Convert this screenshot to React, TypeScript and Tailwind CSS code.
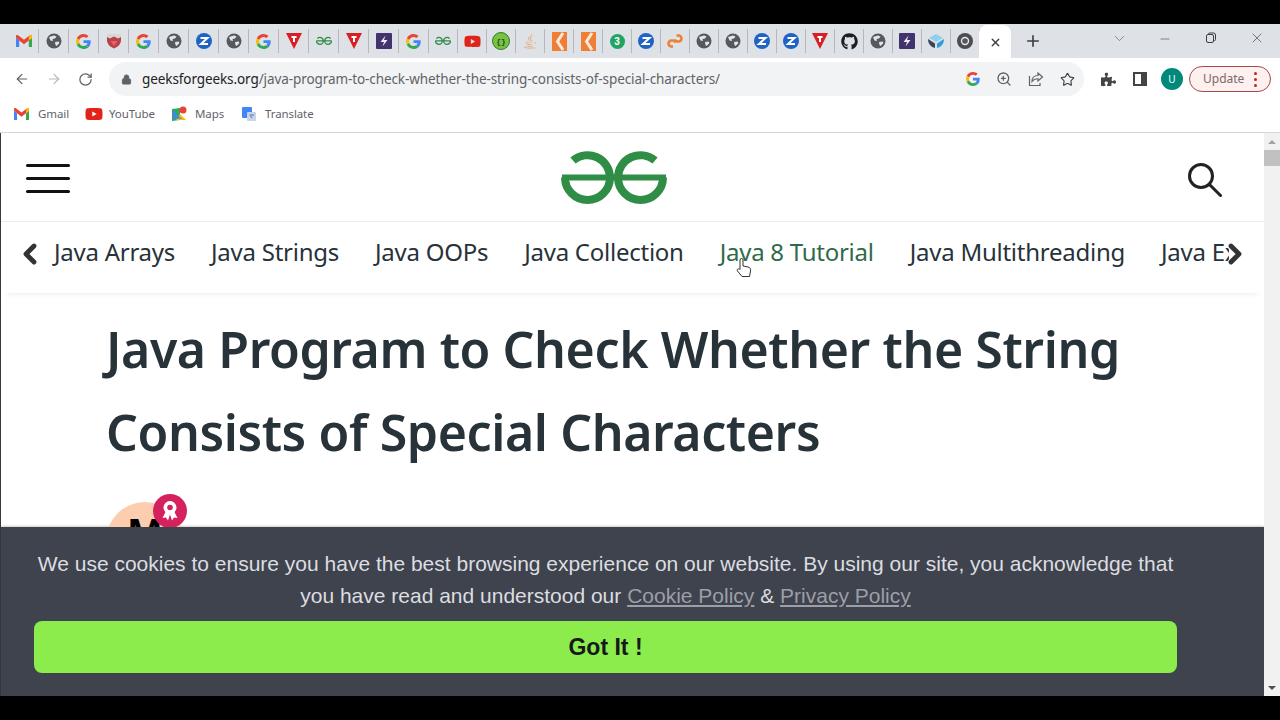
import React from "react";
import { ArrowLeft, ArrowRight, RotateCw, ZoomIn, Star, ChevronDown, Minus, X, Plus, Lock, ChevronLeft, ChevronRight } from "lucide-react";
import { FaGithub, FaYoutube, FaPuzzlePiece, FaJava } from "react-icons/fa";

const GoogleG = ({ s = 15 }: { s?: number }) => (
  <svg width={s} height={s} viewBox="0 0 48 48">
    <path fill="#EA4335" d="M24 9.5c3.54 0 6.71 1.22 9.21 3.6l6.85-6.85C35.9 2.38 30.47 0 24 0 14.62 0 6.51 5.38 2.56 13.22l7.98 6.19C12.43 13.72 17.74 9.5 24 9.5z" />
    <path fill="#4285F4" d="M46.98 24.55c0-1.57-.15-3.09-.38-4.55H24v9.02h12.94c-.58 2.96-2.26 5.48-4.78 7.18l7.73 6c4.51-4.18 7.09-10.36 7.09-17.65z" />
    <path fill="#FBBC05" d="M10.53 28.59c-.48-1.45-.76-2.99-.76-4.59s.27-3.14.76-4.59l-7.98-6.19C.92 16.46 0 20.12 0 24c0 3.88.92 7.54 2.56 10.78l7.97-6.19z" />
    <path fill="#34A853" d="M24 48c6.48 0 11.93-2.13 15.89-5.81l-7.73-6c-2.15 1.45-4.92 2.3-8.16 2.3-6.26 0-11.57-4.22-13.47-9.91l-7.98 6.19C6.51 42.62 14.62 48 24 48z" />
  </svg>
);
const GmailM = ({ s = 16 }: { s?: number }) => (
  <svg width={s} height={s * 0.8} viewBox="0 0 20 16">
    <path fill="#4285F4" d="M0 3v13h4V7z" />
    <path fill="#34A853" d="M16 7v9h4V3z" />
    <path fill="#EA4335" d="M0 1.5 C0 0 2 -0.5 3 .5 L10 6 L17 .5 C18 -.5 20 0 20 1.5 V3 L16 7 L10 11.5 L4 7 L0 3z" />
    <path fill="#FBBC05" d="M16 2.5 V7 L20 4 V1.5 C20 0 18 -.5 17 .5z" />
  </svg>
);
const Globe = () => (
  <svg width="16" height="16" viewBox="0 0 16 16">
    <circle cx="8" cy="8" r="7.5" fill="#56595e" />
    <path fill="#e4e6e9" d="M3 4 L8 2.5 L10.5 3.5 L9 5.5 L6.5 6 L7 8 L4.5 7.5z M9 9 L12.5 8.5 L13.5 10 L10.5 13 L9.5 12z" />
  </svg>
);
const Zed = () => (
  <svg width="16" height="16" viewBox="0 0 16 16">
    <circle cx="8" cy="8" r="8" fill="#1f64c4" />
    <path d="M4.5 5h7L5 11h7" fill="none" stroke="#fff" strokeWidth="2" />
  </svg>
);
const RedV = () => (
  <svg width="16" height="18" viewBox="0 0 16 18">
    <path d="M0 1h16L8 17z" fill="#d81f26" />
    <path d="M5.5 5h5M8 5v5" stroke="#fff" strokeWidth="2" />
  </svg>
);
const Gfg = ({ s = 16 }: { s?: number }) => (
  <svg width={s} height={s * 0.6} viewBox="0 0 106 53" fill="none" stroke="#2f8d46" strokeWidth="9">
    <path d="M9 12A23 23 0 0 1 49 27A23 23 0 0 1 3 27M97 12A23 23 0 0 0 57 27A23 23 0 0 0 103 27M3 27H103" />
  </svg>
);
const Bolt = () => (
  <svg width="16" height="16" viewBox="0 0 16 16">
    <rect width="16" height="16" rx="1" fill="#40336e" />
    <path d="M9.5 2.5 4.5 9H8l-1.5 4.5L11.5 7H8z" fill="#f2e9f5" />
  </svg>
);
const Shield = () => (
  <svg width="16" height="16" viewBox="0 0 16 16">
    <path d="M1 1h14v6c0 4-3 7-7 8.500C4 14 1 11 1 7z" fill="#b8424a" />
    <path d="M1 1h14v3L12 5.500 8 3.500 4 5.500 1 4z" fill="#d9d6cf" />
    <path d="M4.500 8h7L8 13z" fill="#e3656b" />
  </svg>
);
const Curly = () => (
  <svg width="18" height="18" viewBox="0 0 18 18">
    <circle cx="9" cy="9" r="8.500" fill="#79c143" stroke="#2e7d2e" />
    <text x="9" y="12" textAnchor="middle" fontSize="8" fontWeight="700" fill="#1f4d1f" fontFamily="'Liberation Mono', monospace">{"{}"}</text>
  </svg>
);
const K = () => (
  <svg width="15" height="19" viewBox="0 0 15 19">
    <rect width="15" height="19" fill="#ee7f34" />
    <path d="M11 1 5.500 9.500 11 18" fill="none" stroke="#fbe9dc" strokeWidth="3" />
  </svg>
);
const Three = () => (
  <div className="w-[15px] h-[15px] rounded-full bg-[#1fa463] text-white text-[10px] font-bold flex items-center justify-center font-['Liberation_Sans',sans-serif]">3</div>
);
const LinkI = () => (
  <svg width="16" height="16" viewBox="0 0 16 16" fill="none" stroke="#ee7f34" strokeWidth="2.600">
    <path d="M6 13.500H4.500a3 3 0 0 1 0-6H6a3 3 0 0 1 2.500 2" />
    <path d="M9.500 2.500h2a3 3 0 0 1 0 6H10a3 3 0 0 1-2.500-2" />
  </svg>
);
const Cube = () => (
  <svg width="18" height="16" viewBox="0 0 18 16">
    <path d="M9 1l7 4-7 4-7-4z" fill="#8fd0ee" />
    <path d="M1 6l7 4.500V15C4 14 1 11 1 6z" fill="#3a4658" />
    <path d="M17 6l-7 4.500V15c4-1 7-4 7-9z" fill="#2f9ed8" />
  </svg>
);
const ChromeI = () => (
  <svg width="16" height="16" viewBox="0 0 16 16">
    <circle cx="8" cy="8" r="8" fill="#4b4d50" />
    <circle cx="8" cy="8" r="4.200" fill="#e8e9ec" />
    <circle cx="8" cy="8" r="2.800" fill="#55585c" />
  </svg>
);

const tabIcons: React.ReactNode[] = [
  <GmailM />, <Globe />, <GoogleG />, <Shield />, <GoogleG />, <Globe />, <Zed />, <Globe />, <GoogleG />, <RedV />, <Gfg />, <RedV />, <Bolt />, <GoogleG />,
  <Gfg />, <FaYoutube size={17} color="#e2231a" />, <Curly />, <FaJava size={16} color="#e8a56c" />, <K />, <K />, <Three />, <Zed />, <LinkI />, <Globe />, <Globe />, <Zed />, <Zed />, <RedV />,
  <FaGithub size={17} color="#1b1f23" />, <Globe />, <Bolt />, <Cube />, <ChromeI />,
];

const bookmarks: [React.ReactNode, string, string][] = [
  [<GmailM s={15} />, "Gmail", "gap-[9px] w-[71px]"],
  [<FaYoutube size={18} color="#e2231a" />, "YouTube", "gap-[6px] w-[86px]"],
  [<svg width="16" height="16" viewBox="0 0 16 16"><path d="M1 3l8-1v12l-8 1z" fill="#34a853" /><path d="M9 8l6 6H5z" fill="#fbbc05" /><path d="M1 3l10 10H1z" fill="#4285f4" opacity=".8" /><circle cx="12" cy="4" r="3.500" fill="#ea4335" /></svg>, "Maps", "gap-[8px] w-[70px]"],
  [<svg width="16" height="16" viewBox="0 0 16 16"><rect x="1" y="1" width="10" height="11" rx="1" fill="#4285f4" /><rect x="6" y="6" width="9" height="9" rx="1" fill="#c6d3ea" /><path d="M8.500 9h4.500M11 12l-1.500-2" stroke="#5b6f93" strokeWidth="1" /></svg>, "Translate", "gap-[8px] w-[80px]"],
];

const navItems = ["Java Arrays", "Java Strings", "Java OOPs", "Java Collection", "Java 8 Tutorial", "Java Multithreading", "Java Exception"];

export default function App() {
  return (
    <div className="w-[1280px] h-[720px] bg-black py-[24px] overflow-hidden font-['Noto_Sans',sans-serif]">
      <div className="h-[672px] flex flex-col bg-white">
        {/* tab strip */}
        <div className="h-[34px] bg-[#dee1e6] flex items-center pl-[9px] shrink-0">
          {tabIcons.map((icon, i) => (
            <div key={i} className={`${i < 14 ? "w-[30px]" : "w-[29px]"} h-[24px] flex items-center justify-center border-r border-[#b4b7bc] last:border-r-0`}>
              {icon}
            </div>
          ))}
          <div className="-ml-[1px] w-[32px] h-[34px] mt-[2px] bg-white rounded-t-[8px] flex items-center justify-center">
            <X size={13} strokeWidth={2.500} color="#3c4043" />
          </div>
          <Plus size={18} strokeWidth={2.200} color="#3c4043" className="ml-[13px]" />
          <ChevronDown size={17} strokeWidth={1} color="#5f6368" className="ml-[69px] -mt-[6px]" />
          <Minus size={14} strokeWidth={1} color="#3c4043" className="ml-[30px] -mt-[5px]" />
          <svg width="12" height="12" viewBox="0 0 12 12" fill="none" stroke="#3c4043" className="ml-[33px] -mt-[6px]"><rect x="1.500" y="2.500" width="7" height="8" rx="1.500" /><path d="M3.500 2.500V2a1 1 0 0 1 1-1h4a2 2 0 0 1 2 2v4.500a1 1 0 0 1-1 1h-.500" /></svg>
          <X size={16} strokeWidth={1} color="#3c4043" className="ml-[32px] -mt-[6px]" />
        </div>
        {/* toolbar */}
        <div className="h-[40px] pt-[2px] flex items-center shrink-0 relative">
          <div className="w-[109px] flex items-center pl-[14px] gap-[16px] shrink-0">
            <ArrowLeft size={16} color="#5f6368" strokeWidth={1.800} />
            <ArrowRight size={16} color="#b6b9bd" strokeWidth={1.800} />
            <RotateCw size={15} color="#5f6368" strokeWidth={2} />
          </div>
          <div className="w-[975px] h-[34px] rounded-[17px] bg-[#f1f3f4] flex items-center pl-[12px] pr-[9px] shrink-0">
            <Lock size={11} color="#5f6368" fill="#5f6368" />
            <span className="ml-[10px] text-[13.500px] tracking-[-0.09px] text-[#5f6368] whitespace-nowrap"><span className="text-[#202124]">geeksforgeeks.org</span>/java-program-to-check-whether-the-string-consists-of-special-characters/</span>
            <div className="ml-auto flex items-center gap-[16px]">
              <GoogleG s={14} />
              <ZoomIn size={16} color="#5f6368" />
              <svg width="16" height="16" viewBox="0 0 16 16" fill="none" stroke="#5f6368" strokeWidth="1.200"><path d="M14.500 6 10 2v2.500C6 4.500 4 7 4 10.500 5.500 8.500 7.500 7.500 10 7.800V10z" /><path d="M1.500 5v9.500H12V12" /></svg>
              <Star size={15} color="#3c4043" strokeWidth={1.800} />
            </div>
          </div>
          <FaPuzzlePiece size={15} color="#444" className="ml-[17px]" />
          <svg width="14" height="14" viewBox="0 0 14 14" className="ml-[17px]"><rect x="1" y="1" width="12" height="12" fill="none" stroke="#444" strokeWidth="2" /><rect x="8" y="1" width="5" height="12" fill="#444" /></svg>
          <div className="ml-[14px] w-[22px] h-[22px] rounded-full bg-[#00897b] text-white text-[10px] flex items-center justify-center">U</div>
          <div className="ml-[6px] w-[82px] h-[26px] rounded-[13px] border border-[#a5484a] bg-[#fdf0ef] flex items-center pl-[13px] gap-[10px] text-[12px] text-[#7c6a6a]">
            <span>Update</span>
            <span className="flex flex-col gap-[3px]">
              <span className="w-[3px] h-[3px] rounded-full bg-[#c5221f]" />
              <span className="w-[3px] h-[3px] rounded-full bg-[#c5221f]" />
              <span className="w-[3px] h-[3px] rounded-full bg-[#c5221f]" />
            </span>
          </div>
        </div>
        {/* bookmarks */}
        <div className="h-[35px] pb-[3px] box-border border-b border-[#d5d6d8] flex items-center pl-[14px] shrink-0">
          {bookmarks.map(([ic, label, cls]) => (
            <div key={label} className={`flex items-center text-[11.500px] tracking-[-0.1px] text-[#5f6368] ${cls} whitespace-nowrap`}>
              {ic}
              <span>{label}</span>
            </div>
          ))}
        </div>
        {/* browser content */}
        <div className="flex-1 flex min-h-0 border-l border-[#3a3a3a]">
          <div className="flex-1 flex flex-col min-w-0">
            <div className="flex-1 min-h-0 overflow-hidden">
              <div className="h-[89px] border-b border-[#ececec] flex items-center justify-between pl-[25px] pr-[42px]">
                <div className="w-[44px] flex flex-col gap-[10px] mt-[2px]">
                  <div className="h-[3px] bg-[#111] rounded-full" />
                  <div className="h-[3px] bg-[#111] rounded-full" />
                  <div className="h-[3px] bg-[#111] rounded-full" />
                </div>
                <svg width="106" height="53" viewBox="0 0 106 53" fill="none" stroke="#2f8d46" className="mr-[30px]">
                  <path strokeWidth="8" d="M12 9.500A22.500 22.500 0 0 1 49 26.500A22.500 22.500 0 0 1 4 26.500M94 9.500A22.500 22.500 0 0 0 57 26.500A22.500 22.500 0 0 0 102 26.500" />
                  <path strokeWidth="6" d="M1 26.500H105" />
                </svg>
                <svg width="34" height="34" viewBox="0 0 34 34" fill="none" stroke="#222" strokeWidth="3" strokeLinecap="round" className="mt-[6px]">
                  <circle cx="13" cy="13" r="11.500" />
                  <path d="M21.500 21.500 32.500 32.500" />
                </svg>
              </div>
              <div className="relative h-[71px] border-b-0 shadow-[0_6px_6px_-6px_rgba(0,0,0,0.1)]">
                <div className="flex h-full items-center gap-[36px] pl-[53px] pb-[12px] overflow-hidden w-[1228px] whitespace-nowrap text-[24px] tracking-[-0.25px] text-[#273239]">
                  {navItems.map((n) => (
                    <span key={n} className={n === "Java 8 Tutorial" ? "text-[#2f6b4a]" : ""}>{n}</span>
                  ))}
                </div>
                <ChevronLeft size={32} strokeWidth={3.600} color="#333" className="absolute left-[13px] top-[16px]" />
                <ChevronRight size={32} strokeWidth={3.600} color="#333" className="absolute left-[1218px] top-[16px]" />
                <svg width="16" height="22" viewBox="0 0 16 22" className="absolute left-[735px] top-[35px]" fill="#fff" stroke="#333" strokeWidth="1"><path d="M4 11V3a1.500 1.500 0 0 1 3 0v6l5 1c2 .5 3 1.500 2.500 4l-1 5.500H6L1.500 14C.5 12 2.500 11 4 12.500z" /></svg>
              </div>
              <h1 className="pl-[105px] mt-[15px] text-[50px] leading-[83px] font-semibold tracking-[-0.4px] text-[#273239] whitespace-pre-line">
                {"Java Program to Check Whether the String\nConsists of Special Characters"}
              </h1>
              <div className="relative ml-[105px] mt-[20px] w-[82px] h-[64px]">
                <div className="absolute left-0 top-[8px] w-[78px] h-[78px] rounded-full bg-[#fdcdb0] flex justify-center pt-[10px] text-[38px] leading-[38px] font-bold text-black">M</div>
                <div className="absolute left-[47px] top-0 w-[34px] h-[34px] rounded-full bg-[#d6215f] flex items-center justify-center">
                  <svg width="20" height="22" viewBox="0 0 20 22" fill="#fff">
                    <path d="M6 11 2.500 18l3.500-.5 2 3 2-6 2 6 2-3 3.500.5L14 11z" />
                    <circle cx="10" cy="7.500" r="6.500" />
                    <circle cx="10" cy="7.500" r="2.800" fill="#d6215f" />
                  </svg>
                </div>
              </div>
            </div>
            {/* cookie bar */}
            <div className="h-[169px] shrink-0 bg-[#3f434d] pl-[33px] pr-[87px] pt-[21px] font-['Liberation_Sans',sans-serif] shadow-[0_-1px_2px_rgba(0,0,0,0.2)]">
              <p className="text-center text-[21px] leading-[32px] text-[#dcdde0]">
                We use cookies to ensure you have the best browsing experience on our website. By using our site, you acknowledge that you have read and understood our{" "}
                <span className="underline text-[#9b9fa6]">Cookie Policy</span> &amp;{" "}
                <span className="underline text-[#9b9fa6]">Privacy Policy</span>
              </p>
              <div className="mt-[9px] h-[52px] rounded-[8px] bg-[#8bec4c] flex items-center justify-center text-[23px] font-bold text-[#16181c]">Got It !</div>
            </div>
          </div>
          {/* scrollbar */}
          <div className="w-[16px] bg-[#f1f1f1] flex flex-col items-center shrink-0">
            <div className="h-[17px] flex items-center justify-center text-[#a3a3a3]">
              <div className="w-0 h-0 border-x-[4px] border-x-transparent border-b-[4px] border-b-[#a3a3a3]" />
            </div>
            <div className="w-full h-[16px] bg-[#c1c1c1]" />
            <div className="flex-1" />
            <div className="h-[17px] flex items-center justify-center">
              <div className="w-0 h-0 border-x-[4px] border-x-transparent border-t-[4px] border-t-[#505050]" />
            </div>
          </div>
        </div>
      </div>
    </div>
  );
}
